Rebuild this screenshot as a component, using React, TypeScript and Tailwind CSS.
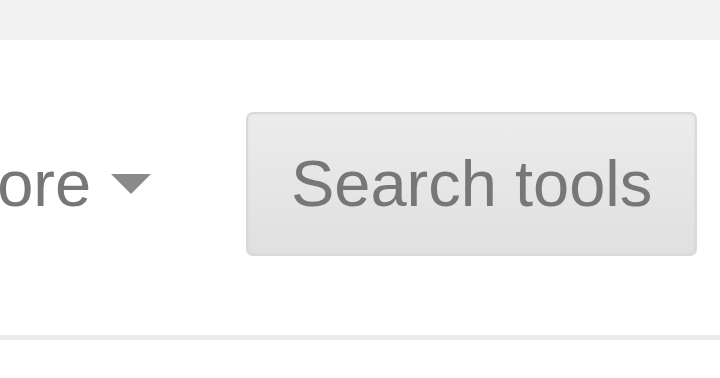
export default function App() {
  return (
    <div className="w-[720px] h-[378px] bg-white overflow-hidden" style={{ fontFamily: '"Liberation Sans", Arial, sans-serif' }}>
      <div className="h-[40px] bg-[#f1f1f1]" />
      <div className="flex items-center pt-[72px] pb-[79px]">
        <span className="ml-[-57px] text-[65px] text-[#777777] leading-normal whitespace-nowrap">More</span>
        <svg className="ml-[20px]" width="40" height="20" viewBox="0 0 40 20">
          <polygon points="0,0 40,0 20,20" fill="#8a8a8a" />
        </svg>
        <button className="ml-[95px] w-[451px] h-[144px] flex items-center justify-center rounded-[7px] border-2 border-[#d9d9d9] bg-gradient-to-b from-[#ececec] to-[#e0e0e0] shadow-[inset_0_0_3px_rgba(0,0,0,0.06)] text-[65px] text-[#777777] leading-normal whitespace-nowrap shrink-0">
          Search tools
        </button>
      </div>
      <div className="h-[5px] bg-[#ebebeb]" />
    </div>
  );
}
